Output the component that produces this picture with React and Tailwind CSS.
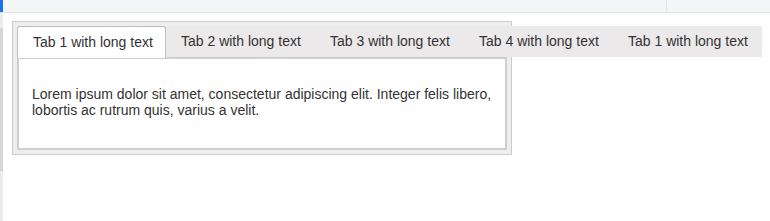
const tabs = [
  "Tab 1 with long text",
  "Tab 2 with long text",
  "Tab 3 with long text",
  "Tab 4 with long text",
  "Tab 1 with long text",
];

export default function App() {
  return (
    <div
      className="w-[770px] h-[221px] overflow-hidden bg-white text-[#333] text-[14px]"
      style={{ fontFamily: '"Liberation Sans", Arial, sans-serif' }}
    >
      {/* top bar */}
      <div className="flex h-[13px] border-b border-[#dfe4ea] bg-[#f4f5f7]">
        <div className="w-[3px] bg-[#1a73e8]" />
        <div className="w-[663px]" />
        <div className="w-px bg-[#dfe4ea]" />
      </div>

      <div className="flex">
        {/* side strip */}
        <div className="w-[3px] h-[208px] flex flex-col bg-[#ececec]">
          <div className="h-[15px]" />
          <div className="h-[143px] bg-[#d6d6d6]" />
        </div>

        {/* tab widget */}
        <div className="ml-[9px] mt-[8px] w-[500px] h-[134px] border border-[#cccccc] bg-[#eeeeee] p-[4px] flex flex-col">
          <div className="flex w-max h-[31px] bg-[#ebe9e9]">
            {tabs.map((t, i) => (
              <div
                key={i}
                className={
                  i === 0
                    ? "w-[149px] px-[15px] flex items-center bg-white border border-b-0 border-[#bdbdbd] rounded-t-[3px] relative z-10 -mb-px"
                    : "w-[149px] px-[15px] flex items-center whitespace-nowrap"
                }
              >
                <span className="whitespace-nowrap">{t}</span>
              </div>
            ))}
          </div>
          <div className="flex-1 bg-white border-2 border-[#cfcfcf] pl-[13px] pr-[13px] pt-[27px]">
            <p className="leading-[16px]">
              Lorem ipsum dolor sit amet, consectetur adipiscing elit. Integer felis libero,
              lobortis ac rutrum quis, varius a velit.
            </p>
          </div>
        </div>
      </div>
    </div>
  );
}
